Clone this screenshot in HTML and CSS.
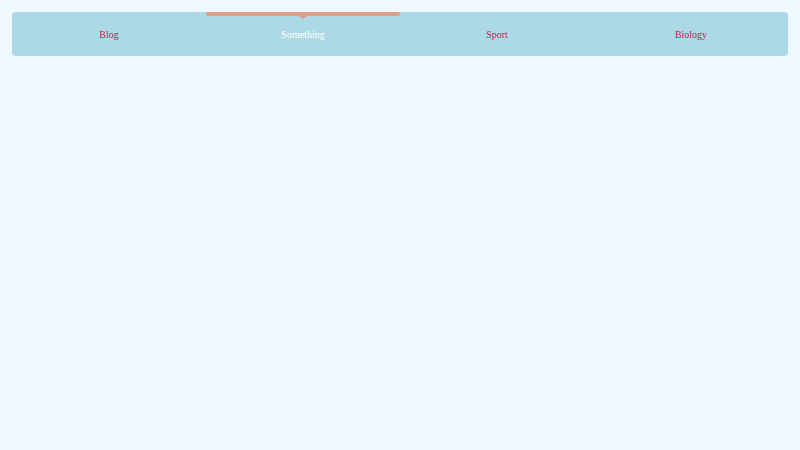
FILE: index.html
```
<!DOCTYPE html>
<html lang="en">
<head>
  <meta charset="UTF-8">
  <meta name="viewport" content="width=device-width, initial-scale=1.0">
  <title>Navigation</title>
  <link rel="stylesheet" href="styles.css">
</head>
<body>
  <nav class="menu">
    <a href="#" class="menu-item">Blog</a>
    <a href="#" class="menu-item active">Something</a>
    <a href="#" class="menu-item">Sport</a>
    <a href="#" class="menu-item">Biology</a>
  </nav>
</body>
</html>
```

FILE: styles.css
```
body {
  margin: 0;
  padding: 12px;
  background-color: aliceblue;
  font-family: "Liberation Serif", "Times New Roman", serif;
  font-size: 10px;
}

.menu {
  display: flex;
  background-color: lightblue;
  border-radius: 4px;
}

.menu-item {
  position: relative;
  flex: 1;
  padding: 17px 0 15px;
  line-height: 12px;
  text-align: center;
  text-decoration: none;
  color: #c8204e;
}

.menu-item.active {
  color: white;
}

/* bar over the active item */
.menu-item.active::before {
  content: "";
  position: absolute;
  top: 0;
  left: 0;
  width: 100%;
  height: 4px;
  border-radius: 2px;
  background-color: #dc9f8a;
}

/* small arrow under the bar */
.menu-item.active::after {
  content: "";
  position: absolute;
  top: 4px;
  left: 50%;
  transform: translateX(-50%);
  border: 4px solid transparent;
  border-top: 3px solid #dc9f8a;
  border-bottom: none;
}
```
